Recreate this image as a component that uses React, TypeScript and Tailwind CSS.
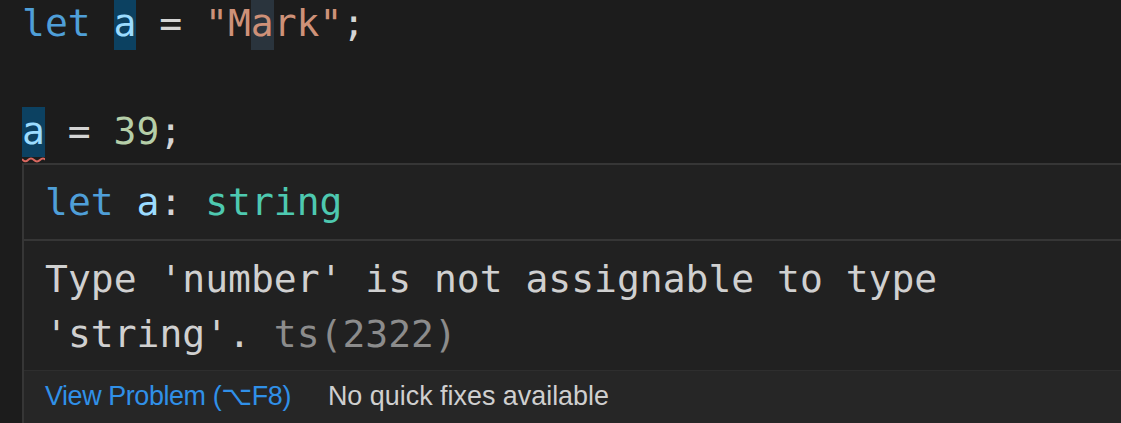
import React from "react";

const mono = { fontFamily: '"DejaVu Sans Mono", "Liberation Mono", monospace' };

export default function App() {
  return (
    <div className="w-[1121px] h-[423px] overflow-hidden bg-[#1c1c1c] flex flex-col">
      <div style={mono} className="text-[38px] pl-[22px] pt-0 -mt-[2px]">
        <div className="h-[54px] flex items-start whitespace-pre">
          <span className="h-[54px] leading-[50px] text-[#4f9fd8]">let </span>
          <span className="h-[52px] leading-[50px] bg-[#0c4161] text-[#9cdcfe]">a</span>
          <span className="h-[54px] leading-[50px] text-[#d4d4d4]"> = </span>
          <span className="h-[54px] leading-[50px] text-[#ce9178]">"M</span>
          <span className="h-[52px] leading-[50px] bg-[#2a343d] text-[#ce9178]">a</span>
          <span className="h-[54px] leading-[50px] text-[#ce9178]">rk"</span>
          <span className="h-[54px] leading-[50px] text-[#d4d4d4]">;</span>
        </div>
        <div className="h-[55px]" />
        <div className="h-[56px] flex items-start whitespace-pre">
          <span className="relative h-[50px] leading-[48px] bg-[#0c4161] text-[#9cdcfe]">
            a
            <svg className="absolute left-0 top-[50px]" width="23" height="6" viewBox="0 0 23 6">
              <path d="M0 2 Q3 6 6 3 T12 3 T18 3 T24 3" fill="none" stroke="#d8675f" strokeWidth="2" />
            </svg>
          </span>
          <span className="h-[50px] leading-[48px] text-[#d4d4d4]"> = </span>
          <span className="h-[50px] leading-[48px] text-[#b5cea8]">39</span>
          <span className="h-[50px] leading-[48px] text-[#d4d4d4]">;</span>
        </div>
      </div>
      <div className="ml-[22px] w-[1200px] flex-1 bg-[#212121] border-l-2 border-t-2 border-[#363636] flex flex-col">
        <div
          style={mono}
          className="h-[76px] flex items-center pl-[21px] text-[38px] whitespace-pre border-b-2 border-[#363636]"
        >
          <span className="text-[#4f9fd8]">let </span>
          <span className="text-[#9cdcfe]">a</span>
          <span className="text-[#d4d4d4]">: </span>
          <span className="text-[#4ec9b0]">string</span>
        </div>
        <div
          style={mono}
          className="h-[129px] pl-[21px] pt-[11px] text-[38px] leading-[55px] text-[#d0d0d0] whitespace-pre"
        >
          <div>Type 'number' is not assignable to type</div>
          <div>
            'string'. <span className="text-[#8c8c8c]">ts(2322)</span>
          </div>
        </div>
        <div
          style={{ fontFamily: '"Liberation Sans", Arial, "DejaVu Sans", sans-serif' }}
          className="flex-1 bg-[#262626] border-t border-[#2e2e2e] flex items-center pl-[21px] pb-[1px] text-[26.9px] gap-[37px]"
        >
          <span className="text-[#3090e8] tracking-[-0.4px]">View Problem (⌥F8)</span>
          <span className="text-[#cfcfcf]">No quick fixes available</span>
        </div>
      </div>
    </div>
  );
}
